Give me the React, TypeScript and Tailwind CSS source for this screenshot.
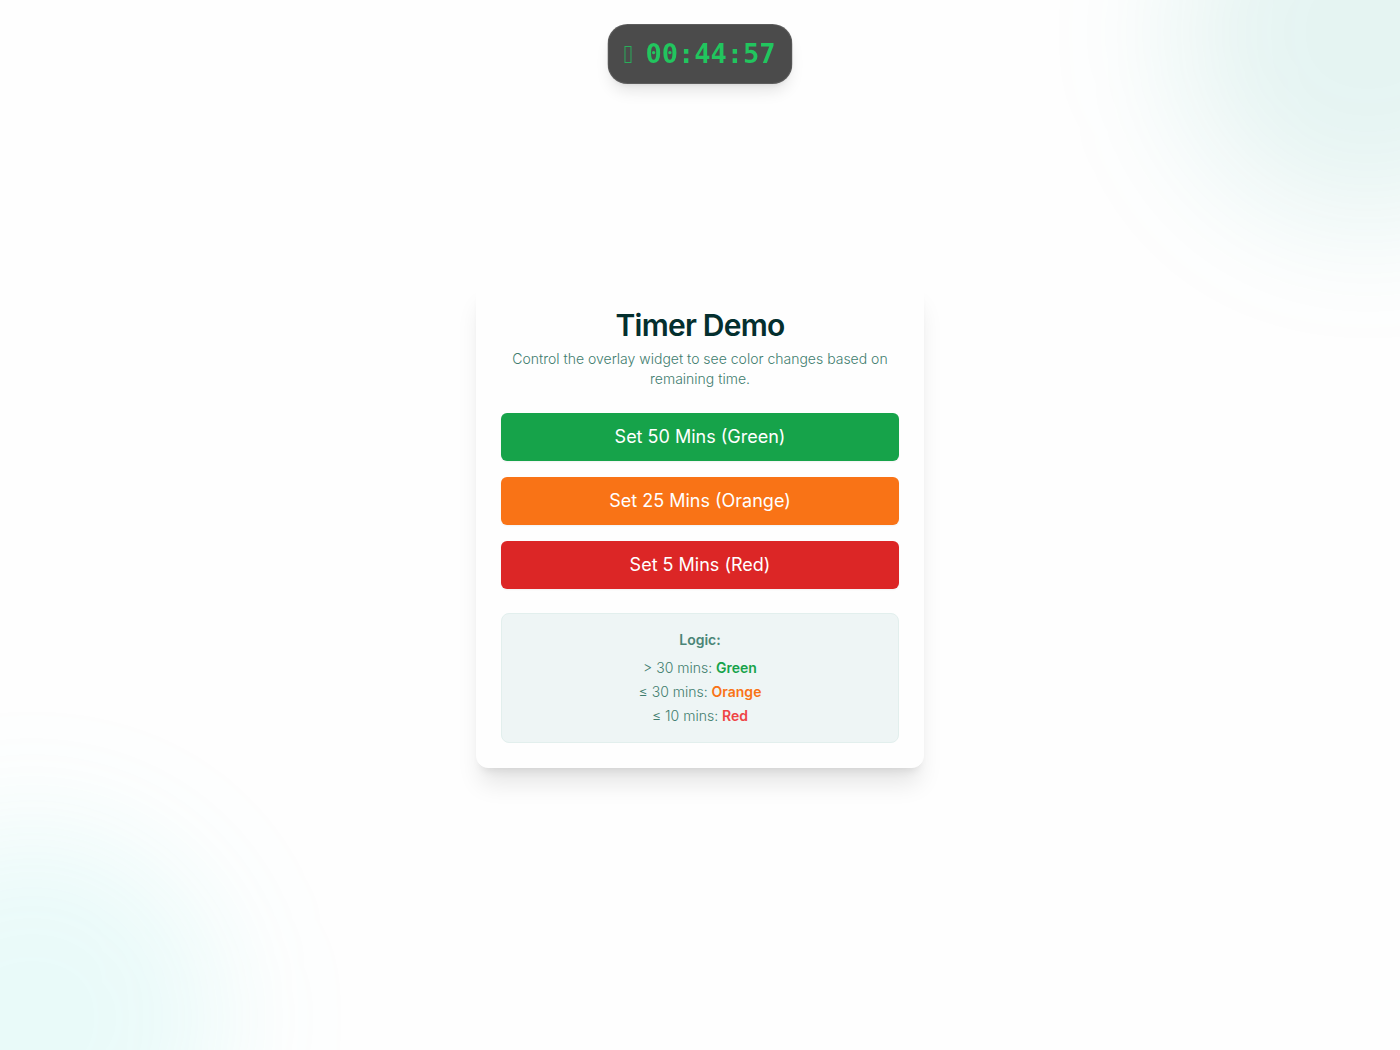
import { useState } from "react";

const presets = [
  { label: "Set 50 Mins (Green)", seconds: 3000, style: "bg-[#16a34a] hover:bg-green-700" },
  { label: "Set 25 Mins (Orange)", seconds: 1500, style: "bg-[#f97316] hover:bg-orange-600" },
  { label: "Set 5 Mins (Red)", seconds: 300, style: "bg-[#dc2626] hover:bg-red-700" },
];

const rules = [
  { range: "> 30 mins:", name: "Green", style: "text-[#16a34a]" },
  { range: "≤ 30 mins:", name: "Orange", style: "text-[#f97316]" },
  { range: "≤ 10 mins:", name: "Red", style: "text-[#ef4444]" },
];

function format(total: number) {
  return [Math.floor(total / 3600), Math.floor(total / 60) % 60, total % 60]
    .map((n) => String(n).padStart(2, "0"))
    .join(":");
}

function colorFor(seconds: number) {
  if (seconds <= 600) return "text-[#ef4444]";
  if (seconds <= 1800) return "text-[#f97316]";
  return "text-[#22c55e]";
}

function TimerWidget({ seconds }: { seconds: number }) {
  return (
    <div
      role="timer"
      className={`fixed top-6 left-1/2 z-10 flex h-[60px] -translate-x-1/2 items-center gap-3.5 rounded-[20px] border border-white/10 bg-[#4b4b4b] px-4 shadow-lg ${colorFor(seconds)}`}
    >
      <span aria-hidden="true" className="h-[17px] w-[7px] border border-current opacity-80" />
      <span className="font-['DejaVu_Sans_Mono',monospace] text-[27px] leading-9 font-bold">
        {format(seconds)}
      </span>
    </div>
  );
}

export default function App() {
  const [seconds, setSeconds] = useState(2697);

  return (
    <div className="relative flex min-h-screen items-center justify-center overflow-hidden bg-[#fefefe] font-[Inter,sans-serif]">
      <div className="absolute -top-40 -right-40 size-96 rounded-full bg-[#0d9f88]/10 blur-3xl" />
      <div className="absolute -bottom-40 -left-40 size-96 rounded-full bg-[#2ddccf]/10 blur-3xl" />
      <TimerWidget seconds={seconds} />

      <main className="relative w-full max-w-md rounded-xl border border-[#fefefe] bg-[#fefefe] text-center shadow-xl">
        <header className="flex flex-col gap-1.5 p-6">
          <h1 className="text-[30px] leading-9 font-semibold tracking-tight text-[#042f2e]">Timer Demo</h1>
          <p className="text-sm font-light text-[#3f7d6e]">
            Control the overlay widget to see color changes based on remaining time.
          </p>
        </header>
        <div className="flex flex-col gap-6 px-6 pb-6">
          <div className="flex flex-col gap-4">
            {presets.map((p) => (
              <button
                key={p.label}
                type="button"
                onClick={() => setSeconds(p.seconds)}
                className={`h-12 rounded-md text-lg text-white shadow-xs ${p.style}`}
              >
                {p.label}
              </button>
            ))}
          </div>
          <section className="rounded-lg border border-[#e2efed] bg-[#eef5f5] p-4 text-sm text-[#4a8577]">
            <h2 className="mb-2 font-semibold">Logic:</h2>
            <ul className="flex flex-col gap-1 font-light text-[#3f7d6e]">
              {rules.map((r) => (
                <li key={r.name}>
                  {r.range} <strong className={`font-semibold ${r.style}`}>{r.name}</strong>
                </li>
              ))}
            </ul>
          </section>
        </div>
      </main>
    </div>
  );
}
